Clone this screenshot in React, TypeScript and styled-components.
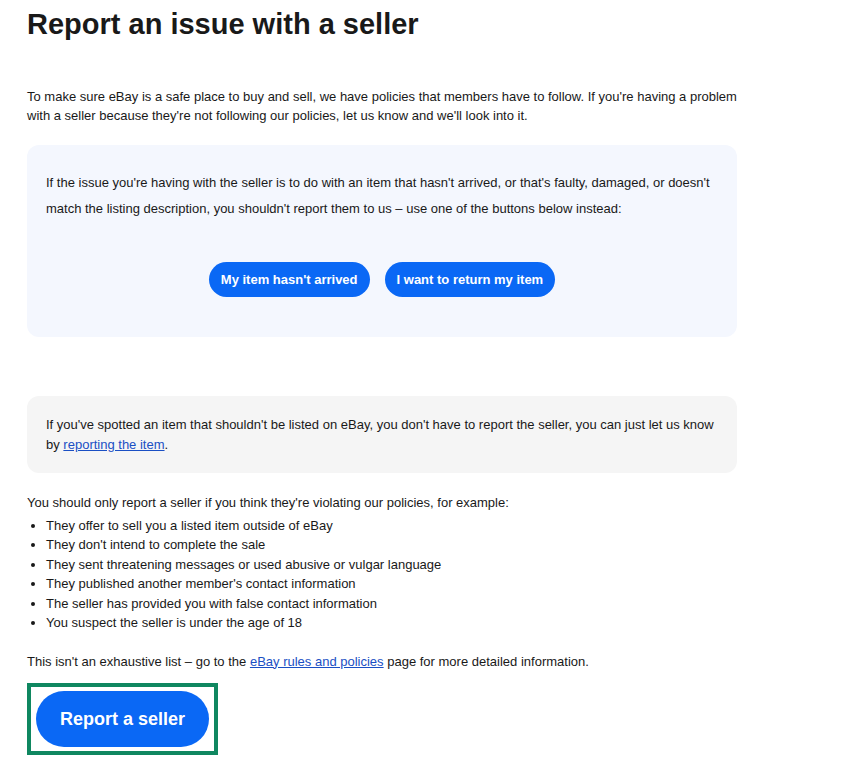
import styled, { createGlobalStyle } from "styled-components";

const GlobalStyle = createGlobalStyle`
  body {
    margin: 0;
    background: #ffffff;
    font-family: "Liberation Sans", Arial, sans-serif;
    color: #191919;
  }
`;

const listItems = [
  "They offer to sell you a listed item outside of eBay",
  "They don't intend to complete the sale",
  "They sent threatening messages or used abusive or vulgar language",
  "They published another member's contact information",
  "The seller has provided you with false contact information",
  "You suspect the seller is under the age of 18",
];

const App = () => {
  return (
    <>
      <GlobalStyle />
      <Page>
        <Title>Report an issue with a seller</Title>
        <Intro>
          To make sure eBay is a safe place to buy and sell, we have policies
          that members have to follow. If you're having a problem with a seller
          because they're not following our policies, let us know and we'll
          look into it.
        </Intro>

        <InfoBox $tone="blue">
          <BoxText $lineHeight={26}>
            If the issue you're having with the seller is to do with an item
            that hasn't arrived, or that's faulty, damaged, or doesn't match the
            listing description, you shouldn't report them to us – use one of
            the buttons below instead:
          </BoxText>
          <ButtonRow>
            <PillButton>My item hasn't arrived</PillButton>
            <PillButton>I want to return my item</PillButton>
          </ButtonRow>
        </InfoBox>

        <InfoBox $tone="grey">
          <BoxText $lineHeight={20}>
            If you've spotted an item that shouldn't be listed on eBay, you
            don't have to report the seller, you can just let us know by{" "}
            <Link href="#">reporting the item</Link>.
          </BoxText>
        </InfoBox>

        <Section>
          <Text>
            You should only report a seller if you think they're violating our
            policies, for example:
          </Text>
          <List>
            {listItems.map((item) => (
              <li key={item}>{item}</li>
            ))}
          </List>
        </Section>

        <Text>
          This isn't an exhaustive list – go to the{" "}
          <Link href="#">eBay rules and policies</Link> page for more detailed
          information.
        </Text>

        <FocusFrame>
          <ReportButton>Report a seller</ReportButton>
        </FocusFrame>
      </Page>
    </>
  );
};

export default App;

const Page = styled.div`
  width: 710px;
  padding: 0 0 0 27px;
  display: flex;
  flex-direction: column;
  align-items: flex-start;
`;

const Title = styled.h1`
  margin: 6px 0 0;
  font-size: 29px;
  line-height: 36px;
  font-weight: 700;
  color: #191919;
`;

const Intro = styled.p`
  margin: 45px 0 0;
  font-size: 13px;
  line-height: 19px;
`;

const InfoBox = styled.div<{ $tone: "blue" | "grey" }>`
  box-sizing: border-box;
  width: 710px;
  margin-top: ${({ $tone }) => ($tone === "blue" ? "20px" : "59px")};
  padding: ${({ $tone }) =>
    $tone === "blue" ? "25px 19px 40px" : "19px 19px 18px"};
  border-radius: 12px;
  background: ${({ $tone }) => ($tone === "blue" ? "#f4f7fe" : "#f5f5f5")};
`;

const BoxText = styled.p<{ $lineHeight: number }>`
  margin: 0;
  font-size: 13px;
  line-height: ${({ $lineHeight }) => $lineHeight}px;
`;

const ButtonRow = styled.div`
  display: flex;
  justify-content: center;
  gap: 15px;
  margin-top: 40px;
`;

const PillButton = styled.button`
  height: 35px;
  padding: 0 12px;
  border: none;
  border-radius: 18px;
  background: #0a68f5;
  color: #ffffff;
  font-family: "Liberation Sans", Arial, sans-serif;
  font-size: 13px;
  font-weight: 700;
  cursor: pointer;
`;

const Section = styled.div`
  margin-top: 20px;
`;

const Text = styled.p`
  margin: 0;
  font-size: 13px;
  line-height: 19.5px;
`;

const List = styled.ul`
  margin: 3px 0 19px;
  padding-left: 19px;
  font-size: 13px;
  line-height: 19.5px;
`;

const Link = styled.a`
  color: #1a4fc4;
  text-decoration: underline;
`;

const FocusFrame = styled.div`
  margin-top: 12px;
  padding: 4px 5px;
  border: 4px solid #0f8760;
`;

const ReportButton = styled.button`
  height: 56px;
  padding: 0 24px;
  border: none;
  border-radius: 28px;
  background: #0a68f5;
  color: #ffffff;
  font-family: "Liberation Sans", Arial, sans-serif;
  font-size: 18px;
  font-weight: 700;
  cursor: pointer;
`;
